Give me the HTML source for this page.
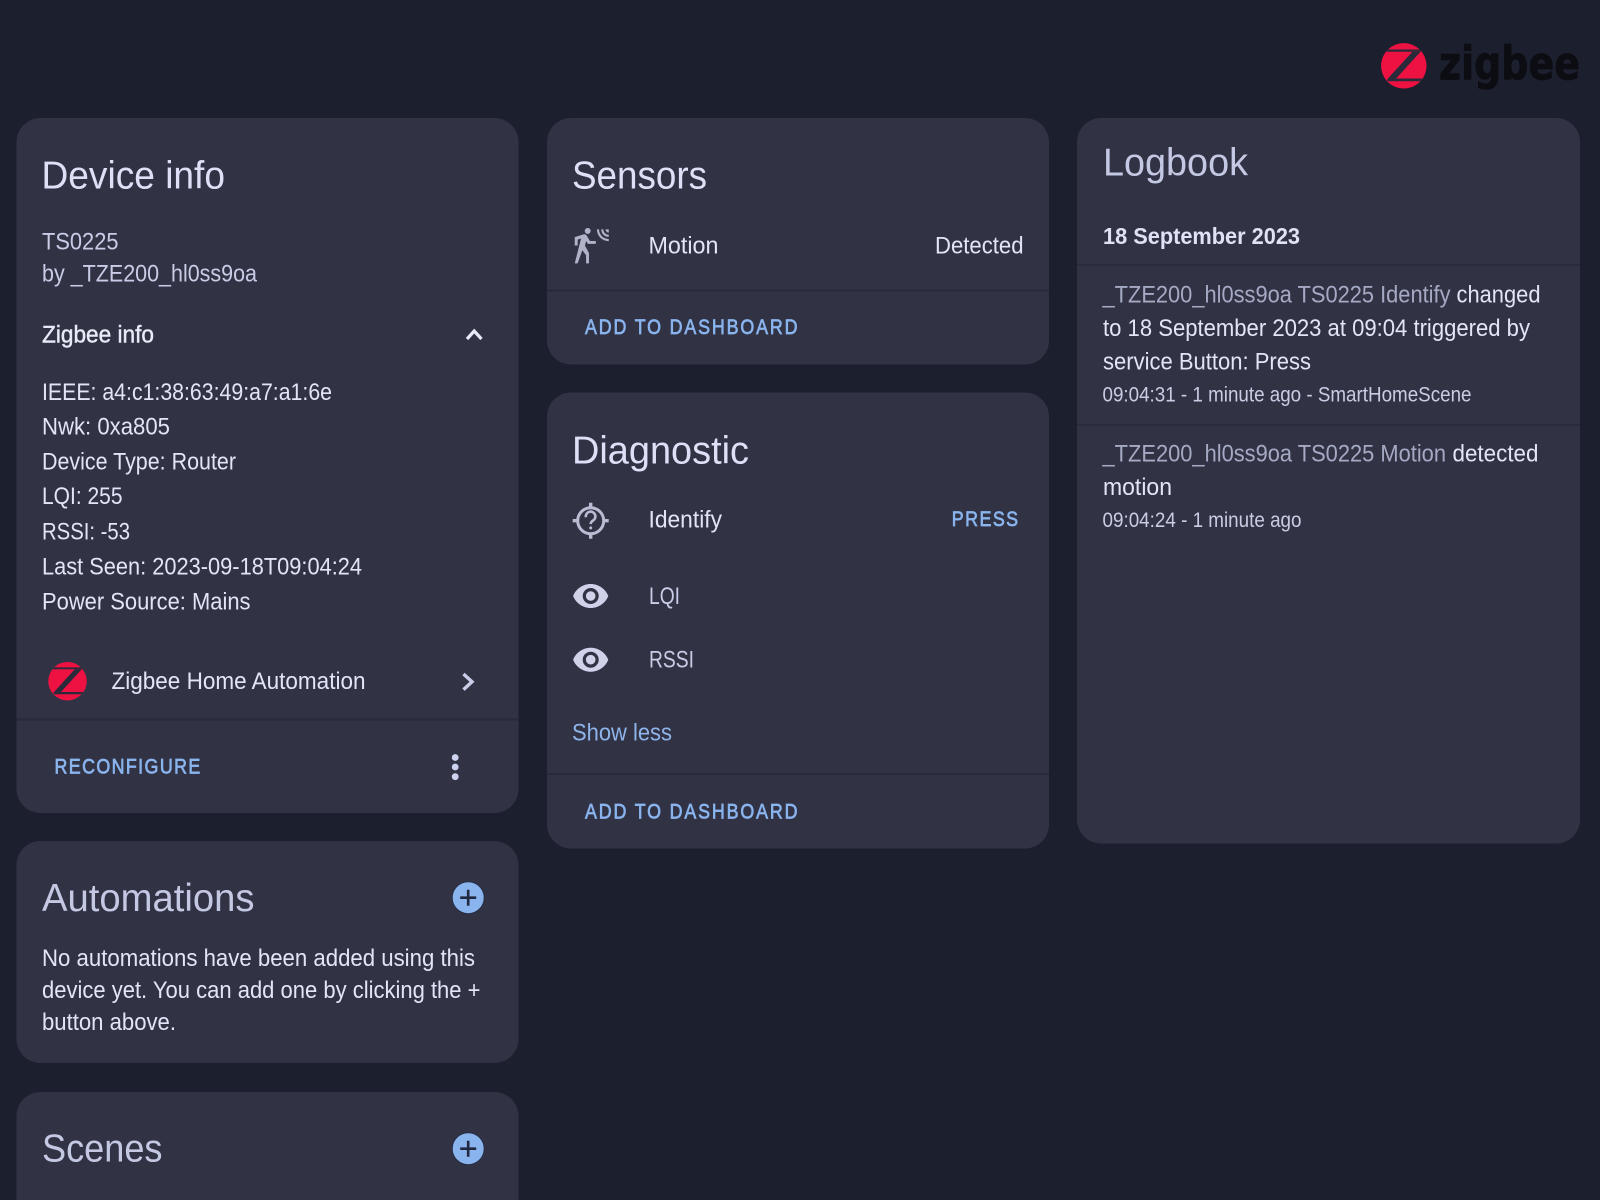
<!DOCTYPE html>
<html lang="en"><head><meta charset="utf-8"><title>Zigbee device</title>
<style>
html,body{margin:0;padding:0;background:#1c1f2e;width:1600px;height:1200px;overflow:hidden}
svg{display:block}
text{font-family:"Liberation Sans",Arial,sans-serif;white-space:pre}
.h{font-size:38.5px;fill:#dde0f6}
.h2{font-size:38.5px;fill:#c4c8e2}
.b{font-size:24.5px;fill:#e2e5f7}
.s{font-size:24.5px;fill:#c9cce6}
.m{font-size:24.5px;fill:#e8eaf8;stroke:#e8eaf8;stroke-width:.45}
.dim{font-size:24.5px;fill:#a6a9c4}
.t{font-size:21.5px;fill:#c9cce3}
.btn{font-size:21px;fill:#8ab4ee;stroke:#8ab4ee;stroke-width:.7}
.card{fill:#313345}
.div{fill:#262a3a}
</style></head>
<body>
<svg width="1600" height="1200" viewBox="0 0 1600 1200" xmlns="http://www.w3.org/2000/svg">
<defs>
<clipPath id="lc"><circle r="50"/></clipPath>
<g id="zlogo">
  <circle r="50" fill="#ee1243"/>
  <g clip-path="url(#lc)" fill="#2a2a3a">
    <path d="M-40-36H40L37-31H-40Z"/>
    <path d="M37-31H19L-35 28H-17Z"/>
    <path d="M-36 28H44V34H-36Z"/>
  </g>
</g>
<g id="plus">
  <circle r="16" fill="#8ab4ee" stroke="#262b42" stroke-width="1"/>
  <path d="M-8 0H8M0-8V8" stroke="#232841" stroke-width="2.6" fill="none"/>
</g>
<path id="eye" fill="#cfd2e8" d="M12,9A3,3 0 0,0 9,12A3,3 0 0,0 12,15A3,3 0 0,0 15,12A3,3 0 0,0 12,9M12,17A5,5 0 0,1 7,12A5,5 0 0,1 12,7A5,5 0 0,1 17,12A5,5 0 0,1 12,17M12,4.5C7,4.5 2.73,7.61 1,12C2.73,16.39 7,19.5 12,19.5C17,19.5 21.27,16.39 23,12C21.27,7.61 17,4.5 12,4.5Z"/>
</defs>

<rect width="1600" height="1200" fill="#1c1f2e"/>

<!-- top logo -->
<use href="#zlogo" transform="translate(1403.8 65.8) scale(.454)"/>
<text x="1439" y="79.5" style="font-family:'DejaVu Sans',sans-serif" font-size="46" font-weight="700" fill="#0c0c13" stroke="#0c0c13" stroke-width=".8" textLength="141" lengthAdjust="spacingAndGlyphs">zigbee</text>

<!-- Device info card -->
<rect class="card" x="16.5" y="118" width="502" height="695" rx="24"/>
<text class="h" x="41.5" y="188.7" textLength="183.5" lengthAdjust="spacingAndGlyphs">Device info</text>
<text class="s" x="42" y="249.5" textLength="76.5" lengthAdjust="spacingAndGlyphs">TS0225</text>
<text class="s" x="42" y="281.7" textLength="215" lengthAdjust="spacingAndGlyphs">by _TZE200_hl0ss9oa</text>
<text class="m" x="42" y="342.3" textLength="112" lengthAdjust="spacingAndGlyphs">Zigbee info</text>
<path d="M467 339L474.2 331L481.5 339" fill="none" stroke="#e8eaf8" stroke-width="3.2"/>

<text class="b" x="42" y="400" textLength="290" lengthAdjust="spacingAndGlyphs">IEEE: a4:c1:38:63:49:a7:a1:6e</text>
<text class="b" x="42" y="434.5" textLength="128" lengthAdjust="spacingAndGlyphs">Nwk: 0xa805</text>
<text class="b" x="42" y="469.5" textLength="194" lengthAdjust="spacingAndGlyphs">Device Type: Router</text>
<text class="b" x="42" y="504" textLength="80.5" lengthAdjust="spacingAndGlyphs">LQI: 255</text>
<text class="b" x="42" y="539.3" textLength="88" lengthAdjust="spacingAndGlyphs">RSSI: -53</text>
<text class="b" x="42" y="574.3" textLength="320" lengthAdjust="spacingAndGlyphs">Last Seen: 2023-09-18T09:04:24</text>
<text class="b" x="42" y="609.3" textLength="208.5" lengthAdjust="spacingAndGlyphs">Power Source: Mains</text>

<use href="#zlogo" transform="translate(67.5 681.2) scale(.385)"/>
<text class="b" x="111.5" y="689" textLength="254" lengthAdjust="spacingAndGlyphs">Zigbee Home Automation</text>
<path d="M463.5 674L472 681.8L463.5 689.6" fill="none" stroke="#c9cde8" stroke-width="3.4"/>
<rect class="div" x="16.5" y="718.5" width="502" height="2"/>
<text class="btn" transform="translate(54.5 773.7) scale(.85 1)" x="0" y="0" textLength="171.5" lengthAdjust="spacing">RECONFIGURE</text>
<g fill="#cdd2ef"><circle cx="455.2" cy="757.5" r="3.4"/><circle cx="455.2" cy="767" r="3.4"/><circle cx="455.2" cy="776.7" r="3.4"/></g>

<!-- Automations card -->
<rect class="card" x="16.5" y="841" width="502" height="222" rx="24"/>
<text class="h2" x="42" y="911" textLength="212.5" lengthAdjust="spacingAndGlyphs">Automations</text>
<use href="#plus" transform="translate(468.2 897.7)"/>
<text class="b" x="42" y="966" textLength="433" lengthAdjust="spacingAndGlyphs">No automations have been added using this</text>
<text class="b" x="42" y="998" textLength="438.5" lengthAdjust="spacingAndGlyphs">device yet. You can add one by clicking the +</text>
<text class="b" x="42" y="1030" textLength="134" lengthAdjust="spacingAndGlyphs">button above.</text>

<!-- Scenes card -->
<rect class="card" x="16.5" y="1092" width="502" height="160" rx="24"/>
<text class="h2" x="42" y="1161.7" textLength="120.5" lengthAdjust="spacingAndGlyphs">Scenes</text>
<use href="#plus" transform="translate(468.2 1148.7)"/>

<!-- Sensors card -->
<rect class="card" x="547" y="118" width="502" height="246.5" rx="24"/>
<text class="h" x="572" y="188.5" textLength="135" lengthAdjust="spacingAndGlyphs">Sensors</text>
<path transform="translate(571.5 227.7) scale(1.62)" fill="#b0b3c8" d="M10,0.2C9,0.2 8.2,1 8.2,2C8.2,3 9,3.8 10,3.8C11,3.8 11.8,3 11.8,2C11.8,1 11,0.2 10,0.2M15.67,1A7.33,7.33 0 0,0 23,8.33V7A6,6 0 0,1 17,1H15.67M18.33,1C18.33,3.58 20.42,5.67 23,5.67V4.33C21.16,4.33 19.67,2.84 19.67,1H18.33M21,1A2,2 0 0,0 23,3V1H21M7.92,4.03C7.75,4.03 7.58,4.06 7.42,4.11L2,5.8V11H3.8V7.33L5.91,6.67L2,22H3.8L6.67,13.89L9,17V22H10.8V15.59L8.31,11.05L9.04,8.18L10.12,10H15V8.2H11.38L9.38,4.87C9.08,4.37 8.54,4.03 7.92,4.03Z"/>
<text class="b" x="648.5" y="253.3" textLength="70" lengthAdjust="spacingAndGlyphs">Motion</text>
<text class="b" x="935" y="253.3" textLength="88.5" lengthAdjust="spacingAndGlyphs">Detected</text>
<rect class="div" x="547" y="289.5" width="502" height="2"/>
<text class="btn" transform="translate(585 334) scale(.85 1)" x="0" y="0" textLength="250" lengthAdjust="spacing">ADD TO DASHBOARD</text>

<!-- Diagnostic card -->
<rect class="card" x="547" y="392.5" width="502" height="456" rx="24"/>
<text class="h" x="572" y="463.3" textLength="177" lengthAdjust="spacingAndGlyphs">Diagnostic</text>
<g transform="translate(590.7 520.7)" fill="none" stroke="#b9bcd2">
  <circle r="13" stroke-width="3"/>
  <path d="M0-18V-14M0 14V18M-18 0H-14M14 0H18" stroke-width="3.4"/>
  <path d="M-4.8-3.4A4.8 4.8 0 1 1 2.4-.2C.8.8 0 1.6 0 3.4" stroke-width="2.6"/>
  <circle cy="7.2" r="1.5" fill="#b9bcd2" stroke="none"/>
</g>
<text class="b" x="648.5" y="527.3" textLength="73.5" lengthAdjust="spacingAndGlyphs">Identify</text>
<text class="btn" transform="translate(951.8 526) scale(.85 1)" x="0" y="0" textLength="78" lengthAdjust="spacing">PRESS</text>
<use href="#eye" transform="translate(571.5 576.8) scale(1.6)"/>
<text class="s" x="649" y="604" textLength="31" lengthAdjust="spacingAndGlyphs">LQI</text>
<use href="#eye" transform="translate(571.5 640.5) scale(1.6)"/>
<text class="s" x="649" y="667.3" textLength="45" lengthAdjust="spacingAndGlyphs">RSSI</text>
<text x="572" y="740.7" font-size="24.5" fill="#8fb4ea" textLength="100" lengthAdjust="spacingAndGlyphs">Show less</text>
<rect class="div" x="547" y="773" width="502" height="2"/>
<text class="btn" transform="translate(585 818.3) scale(.85 1)" x="0" y="0" textLength="250" lengthAdjust="spacing">ADD TO DASHBOARD</text>

<!-- Logbook card -->
<rect class="card" x="1077" y="118" width="503" height="725.5" rx="24"/>
<text class="h2" x="1103" y="175.7" textLength="145" lengthAdjust="spacingAndGlyphs">Logbook</text>
<text x="1103" y="244" font-size="23.5" font-weight="700" fill="#dfe2f5" textLength="197" lengthAdjust="spacingAndGlyphs">18 September 2023</text>
<rect class="div" x="1077" y="264" width="503" height="1.5"/>
<text class="dim" x="1102.5" y="302.7" textLength="348" lengthAdjust="spacingAndGlyphs">_TZE200_hl0ss9oa TS0225 Identify</text>
<text class="b" x="1456.5" y="302.7" textLength="84" lengthAdjust="spacingAndGlyphs">changed</text>
<text class="b" x="1103" y="336" textLength="427" lengthAdjust="spacingAndGlyphs">to 18 September 2023 at 09:04 triggered by</text>
<text class="b" x="1103" y="369.3" textLength="208" lengthAdjust="spacingAndGlyphs">service Button: Press</text>
<text class="t" x="1102.5" y="401.7" textLength="369" lengthAdjust="spacingAndGlyphs">09:04:31 - 1 minute ago - SmartHomeScene</text>
<rect class="div" x="1077" y="424" width="503" height="1.5"/>
<text class="dim" x="1102.5" y="461.7" textLength="343.5" lengthAdjust="spacingAndGlyphs">_TZE200_hl0ss9oa TS0225 Motion</text>
<text class="b" x="1452.5" y="461.7" textLength="86" lengthAdjust="spacingAndGlyphs">detected</text>
<text class="b" x="1103" y="495" textLength="69" lengthAdjust="spacingAndGlyphs">motion</text>
<text class="t" x="1102.5" y="527" textLength="199" lengthAdjust="spacingAndGlyphs">09:04:24 - 1 minute ago</text>
</svg>
</body></html>
